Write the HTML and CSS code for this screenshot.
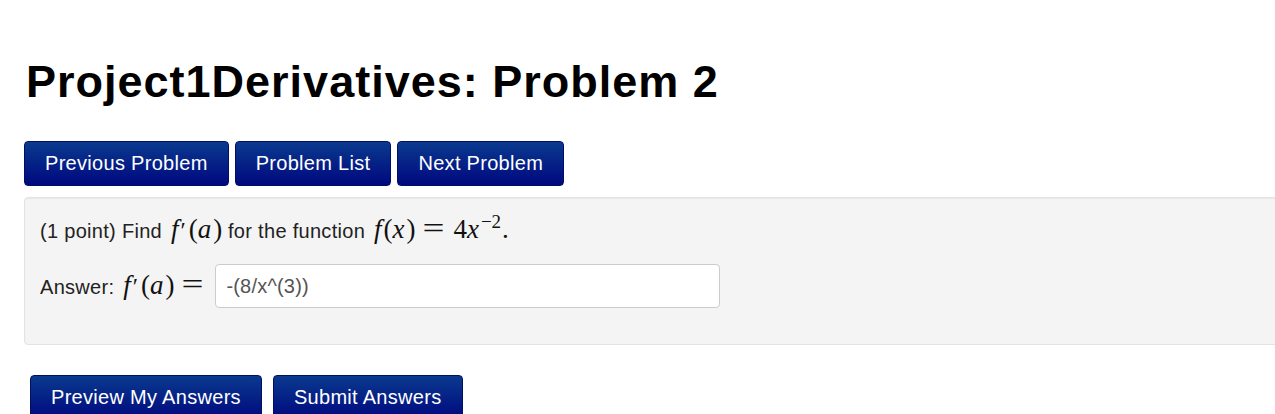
FILE: index.html
```html
<!DOCTYPE html>
<html>
<head>
<meta charset="utf-8">
<link rel="stylesheet" href="styles.css">
</head>
<body>
<div class="page">
  <h1 class="title">Project1Derivatives: Problem 2</h1>
  <div class="nav">
    <button class="btn">Previous Problem</button>
    <button class="btn">Problem List</button>
    <button class="btn">Next Problem</button>
  </div>
  <div class="well">
    <p class="problem">(1 point) Find <span class="m"><i class="f">f</i><span class="pr">′</span>(<i>a</i>)</span> for the function <span class="m"><i class="f">f</i>(<i>x</i>)<span class="eq">=</span>4<i>x</i><sup class="sup">−2</sup>.</span></p>
    <div class="answer">
      <span class="label">Answer: <span class="m"><i class="f">f</i><span class="pr">′</span>(<i>a</i>)<span class="eq eq-end">=</span></span></span>
      <input class="field" type="text" value="-(8/x^(3))">
    </div>
  </div>
  <div class="submit">
    <button class="btn">Preview My Answers</button>
    <button class="btn">Submit Answers</button>
  </div>
</div>
</body>
</html>
```

FILE: styles.css
```css
html, body {
  margin: 0;
  padding: 0;
  overflow: hidden;
  background: #fff;
}
body {
  font-family: "Liberation Sans", Arial, sans-serif;
  color: #222;
}
.page {
  padding-left: 24px;
  width: 1400px;
}
.title {
  margin: 58px 0 0 2px;
  font-size: 45px;
  line-height: 48px;
  font-weight: bold;
  color: #000;
  letter-spacing: 1px;
}
.nav {
  margin-top: 35px;
  display: flex;
  gap: 6px;
}
.btn {
  font-family: "Liberation Sans", Arial, sans-serif;
  font-size: 20px;
  line-height: 23px;
  letter-spacing: 0.3px;
  color: #fff;
  padding: 10px 20px;
  border: 1px solid #00105f;
  border-radius: 4px;
  background: linear-gradient(#0a3a8e, #00087f);
  cursor: pointer;
}
.well {
  margin-top: 11px;
  background: #f4f4f4;
  border: 1px solid #e3e3e3;
  border-radius: 4px;
  box-shadow: inset 0 1px 1px rgba(0,0,0,0.05);
  padding: 20px 15px 36px 15px;
  width: 1300px;
}
.problem {
  margin: 0;
  font-size: 20px;
  line-height: 26px;
  letter-spacing: 0.3px;
}
.m {
  font-family: "Liberation Serif", "Times New Roman", serif;
  font-size: 27px;
  line-height: 20px;
  letter-spacing: 0;
  color: #111;
}
.m i {
  font-style: italic;
  margin-right: 2px;
}
.m i.f {
  margin-left: 3px;
  margin-right: 2px;
}
.pr {
  font-size: 24px;
  margin-right: 3px;
}
.eq {
  display: inline-block;
  font-size: 30px;
  margin: 0 11px 0 10px;
  transform: scaleX(1.3);
}
.eq-end {
  margin-right: 4px;
}
.sup {
  font-size: 19px;
  vertical-align: 10px;
  line-height: 0;
  margin-left: 0;
  margin-right: 1px;
}
.answer {
  margin-top: 20px;
  display: flex;
  align-items: center;
  gap: 10px;
}
.label {
  font-size: 20px;
  letter-spacing: 0.3px;
}
.field {
  box-sizing: border-box;
  width: 505px;
  height: 44px;
  padding: 0 10px;
  border: 1px solid #ccc;
  border-radius: 4px;
  background: #fff;
  font-family: "Liberation Sans", Arial, sans-serif;
  font-size: 20px;
  color: #555;
  letter-spacing: 0.2px;
}
.submit {
  margin: 30px 0 0 6px;
  display: flex;
  gap: 11px;
}
```
